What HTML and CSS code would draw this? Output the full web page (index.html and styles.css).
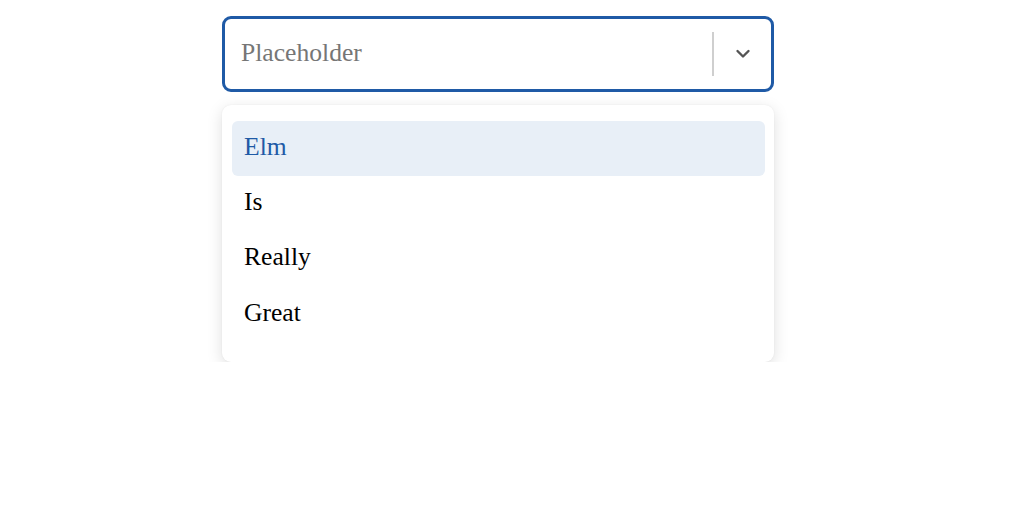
FILE: index.html
```html
<!DOCTYPE html>
<html lang="en">
  <head>
    <meta charset="UTF-8" />
    <meta name="viewport" content="width=device-width, initial-scale=1.0" />
    <title>Select</title>
    <link rel="stylesheet" href="styles.css">
  </head>
  <body>
    <div class="select">
      <!-- Control -->
      <div class="control">
        <div class="value">Placeholder</div>
        <div class="indicators">
          <span class="separator"></span>
          <span class="dropdown">
            <svg width="20" height="20" viewBox="0 0 20 20" aria-hidden="true">
              <path d="M4.5 7 L10 12.5 L15.5 7" fill="none" stroke="#555" stroke-width="2.4" stroke-linecap="round" stroke-linejoin="round" />
            </svg>
          </span>
        </div>
      </div>

      <!-- Menu -->
      <ul class="menu">
        <li class="option focused">Elm</li>
        <li class="option">Is</li>
        <li class="option">Really</li>
        <li class="option">Great</li>
      </ul>
    </div>
  </body>
</html>
```

FILE: styles.css
```css
body {
  margin: 0;
  padding: 0;
  background: #fff;
  font-family: "Liberation Serif", "Times New Roman", serif;
  font-size: 25.6px;
}

.select {
  width: 552px;
  margin: 16px 0 0 222px;
}

/* Control */
.control {
  box-sizing: border-box;
  height: 76px;
  display: flex;
  align-items: center;
  border: 3px solid #1f5aa6;
  border-radius: 9px;
  background: #fff;
}

.value {
  flex: 1;
  padding: 0 0 3px 16px;
  color: #767676;
}

.indicators {
  display: flex;
  align-items: center;
  align-self: stretch;
}

.separator {
  width: 2px;
  height: 44px;
  background: #cfcfcf;
}

.dropdown {
  width: 57px;
  display: flex;
  justify-content: center;
  align-items: center;
}

.dropdown svg {
  display: block;
}

/* Menu */
.menu {
  list-style: none;
  margin: 13px 0 0;
  padding: 16px 9px 19px 10px;
  background: #fff;
  border-radius: 9px;
  box-shadow: 0 4px 16px rgba(0, 0, 0, 0.13), 0 0 2px rgba(0, 0, 0, 0.06);
}

.option {
  box-sizing: border-box;
  height: 55.4px;
  display: flex;
  align-items: center;
  padding: 0 12px 4px;
  border-radius: 6px;
  color: #000;
}

.option.focused {
  background: #e8eff7;
  color: #1f5aa6;
}
```
